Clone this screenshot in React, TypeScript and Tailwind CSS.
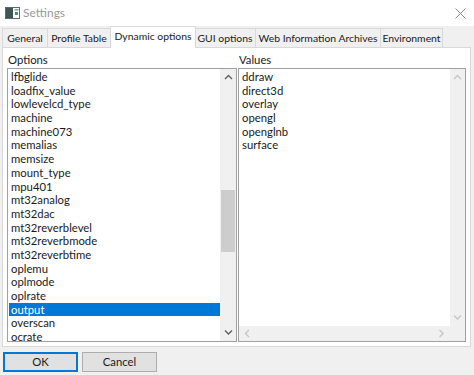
const options = [
  'lfbglide',
  'loadfix_value',
  'lowlevelcd_type',
  'machine',
  'machine073',
  'memalias',
  'memsize',
  'mount_type',
  'mpu401',
  'mt32analog',
  'mt32dac',
  'mt32reverblevel',
  'mt32reverbmode',
  'mt32reverbtime',
  'oplemu',
  'oplmode',
  'oplrate',
  'output',
  'overscan',
  'ocrate',
];

const values = ['ddraw', 'direct3d', 'overlay', 'opengl', 'openglnb', 'surface'];

const tabs = [
  { label: 'General', w: 'w-[46px]' },
  { label: 'Profile Table', w: 'w-[63px]' },
  { label: 'Dynamic options', w: 'w-[86px]', active: true },
  { label: 'GUI options', w: 'w-[61px]' },
  { label: 'Web Information Archives', w: 'w-[125px]' },
  { label: 'Environment', w: 'w-[62px]' },
];

function Chevron({ dir, color }: { dir: 'up' | 'down' | 'left' | 'right'; color: string }) {
  const d = {
    up: 'M1 5 L4.5 1.5 L8 5',
    down: 'M1 1.5 L4.5 5 L8 1.5',
    left: 'M5 1 L1.5 4.5 L5 8',
    right: 'M1.5 1 L5 4.5 L1.5 8',
  }[dir];
  const vertical = dir === 'up' || dir === 'down';
  return (
    <svg
      width={vertical ? 9 : 7}
      height={vertical ? 7 : 9}
      viewBox={vertical ? '0 0 9 7' : '0 0 7 9'}
      fill="none"
      stroke={color}
      strokeWidth="1.4"
    >
      <path d={d} />
    </svg>
  );
}

function AppIcon() {
  return (
    <svg width="15" height="12" viewBox="0 0 15 12">
      <rect x="0.5" y="0.5" width="14" height="11" fill="#ffffff" stroke="#5a6b6b" />
      <rect x="1" y="1" width="7" height="10" fill="#3f5454" />
      <rect x="9.5" y="2" width="4" height="1.5" fill="#7fa0a0" />
      <rect x="10" y="5" width="3" height="3" fill="#4a8a8a" />
    </svg>
  );
}

export default function App() {
  return (
    <div
      className="w-[474px] h-[375px] bg-[#f0f0f0] flex flex-col overflow-hidden text-[11.3px] leading-[14px] text-[#1a1a1a]"
      style={{ fontFamily: 'Lato, "Noto Sans", sans-serif' }}
    >
      {/* title bar */}
      <div className="h-[26px] bg-white flex items-center pl-[5px] pr-[8px] shrink-0">
        <AppIcon />
        <span className="ml-[3px] text-[#9a9a9a] text-[12px]">Settings</span>
        <div className="ml-auto text-[#8a8a8a]">
          <svg width="11" height="11" viewBox="0 0 11 11" stroke="currentColor" strokeWidth="1">
            <path d="M0.5 0.5 L10.5 10.5 M10.5 0.5 L0.5 10.5" />
          </svg>
        </div>
      </div>

      {/* tabs */}
      <div className="flex items-end h-[22px] pl-[2px] shrink-0 relative z-10 text-[10.4px]">
        {tabs.map((t) =>
          t.active ? (
            <div
              key={t.label}
              className={`${t.w} h-[22px] -mx-[1px] bg-white border border-b-0 border-[#d9d9d9] flex items-center justify-center pb-[3px] whitespace-nowrap`}
            >
              {t.label}
            </div>
          ) : (
            <div
              key={t.label}
              className={`${t.w} h-[20px] border border-b-0 border-l-0 first:border-l border-[#d9d9d9] flex items-center justify-center pb-[1px] whitespace-nowrap`}
            >
              {t.label}
            </div>
          ),
        )}
      </div>

      {/* panel */}
      <div className="mx-[2px] w-[469px] h-[300px] -mt-[1px] bg-white border border-[#d9d9d9] flex gap-[1px] pl-[4px] pt-[3px] shrink-0">
        {/* options column */}
        <div className="flex flex-col w-[230px]">
          <div className="h-[17px] flex items-center pl-[1px]">Options</div>
          <div className="h-[274px] border border-[#a0a0a0] flex overflow-hidden">
            <div className="flex-1 pt-[1px] pl-[1px] overflow-hidden">
              {options.map((o) => (
                <div
                  key={o}
                  className={`h-[13.7px] leading-[13.7px] pl-[2px] whitespace-nowrap ${
                    o === 'output' ? 'bg-[#0078d7] text-white' : ''
                  }`}
                >
                  {o}
                </div>
              ))}
            </div>
            <div className="w-[16px] bg-[#f0f0f0] flex flex-col items-center">
              <div className="h-[17px] flex items-center justify-center">
                <Chevron dir="up" color="#606060" />
              </div>
              <div className="flex-1 w-full px-[1px] pt-[104px]">
                <div className="h-[62px] bg-[#cdcdcd]" />
              </div>
              <div className="h-[17px] flex items-center justify-center">
                <Chevron dir="down" color="#606060" />
              </div>
            </div>
          </div>
        </div>

        {/* values column */}
        <div className="flex flex-col w-[228px]">
          <div className="h-[17px] flex items-center pl-[1px]">Values</div>
          <div className="h-[274px] border border-[#a0a0a0] flex flex-col overflow-hidden">
            <div className="flex flex-1 min-h-0">
              <div className="flex-1 pt-[1px] pl-[3px]">
                {values.map((v) => (
                  <div key={v} className="h-[13.7px] leading-[13.7px]">
                    {v}
                  </div>
                ))}
              </div>
              <div className="w-[15px] bg-[#f0f0f0] flex flex-col items-center justify-between">
                <div className="h-[17px] flex items-center justify-center">
                  <Chevron dir="up" color="#c6c6c6" />
                </div>
                <div className="h-[17px] flex items-center justify-center">
                  <Chevron dir="down" color="#c6c6c6" />
                </div>
              </div>
            </div>
            <div className="h-[15px] flex">
              <div className="flex-1 bg-[#f0f0f0] flex items-center justify-between px-[5px]">
                <Chevron dir="left" color="#c6c6c6" />
                <Chevron dir="right" color="#c6c6c6" />
              </div>
              <div className="w-[15px] bg-[#f0f0f0]" />
            </div>
          </div>
        </div>
      </div>

      {/* buttons */}
      <div className="flex gap-[4px] pl-[3px] pt-[5px]">
        <button className="w-[75px] h-[20px] bg-[#e1e1e1] border-2 border-[#0078d7] flex items-center justify-center">
          OK
        </button>
        <button className="w-[75px] h-[20px] bg-[#e1e1e1] border border-[#adadad] flex items-center justify-center">
          Cancel
        </button>
      </div>
    </div>
  );
}
